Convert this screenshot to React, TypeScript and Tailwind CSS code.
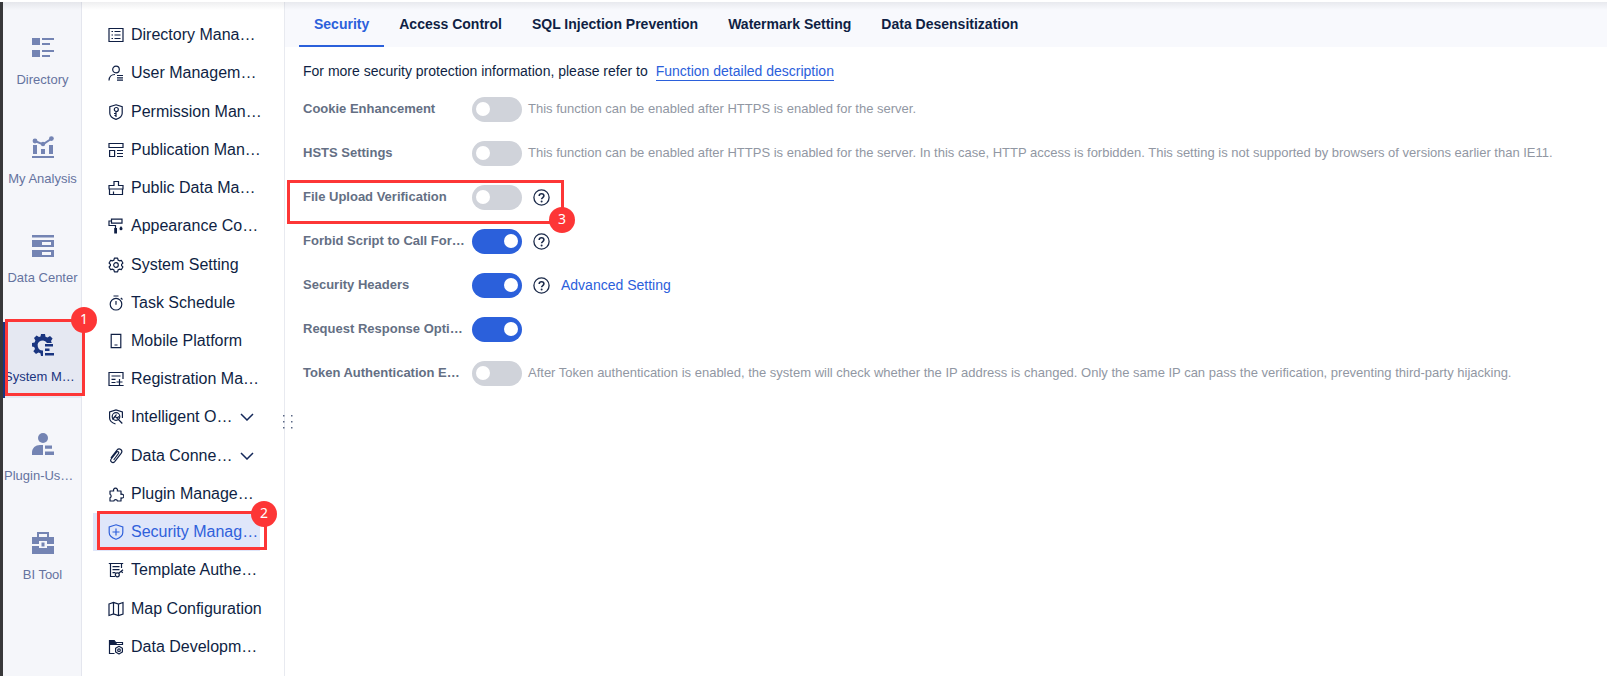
import { useState, type ReactNode } from "react";

const NAVY = "#14285a";

function Badge({ n, className }: { n: number; className: string }) {
  return (
    <span
      className={`absolute z-20 flex size-[26px] items-center justify-center rounded-full bg-[#fd3636] pb-0.5 font-['Noto_Sans',sans-serif] text-sm text-white ${className}`}
    >
      {n}
    </span>
  );
}

function Frame({ className }: { className: string }) {
  return <span className={`pointer-events-none absolute z-10 border-3 border-[#fd3636] ${className}`} />;
}

function NavIcon({ children }: { children: ReactNode }) {
  return (
    <svg width="22" height="22" viewBox="0 0 22 22" fill="currentColor" aria-hidden="true">
      {children}
    </svg>
  );
}

function MenuIcon({ children }: { children: ReactNode }) {
  return (
    <svg
      width="16"
      height="16"
      viewBox="0 0 16 16"
      fill="none"
      stroke="currentColor"
      strokeWidth="1.2"
      className="shrink-0"
      aria-hidden="true"
    >
      {children}
    </svg>
  );
}

const navItems: { label: string; clipped?: boolean; active?: boolean; icon: ReactNode }[] = [
  {
    label: "Directory",
    icon: <path d="M0 1h8v7H0zM10 1h12v2H10zM10 6h8v2h-8zM0 13h8v7H0zM10 13h12v2H10zM10 18h8v2h-8z" />,
  },
  {
    label: "My Analysis",
    icon: (
      <>
        <path d="M1 9h4v9H1zM9 13h4v5H9zM17 9h4v9h-4zM0 20h22v2H0z" />
        <path d="M3 5l8 3.4L19 3" fill="none" stroke="currentColor" strokeWidth="2" />
        <circle cx="3" cy="5" r="2.4" />
        <circle cx="11" cy="8" r="2.2" />
        <circle cx="19.4" cy="2.6" r="2.4" />
      </>
    ),
  },
  {
    label: "Data Center",
    icon: <path fillRule="evenodd" d="M0 0h22v2.4H0zM0 5h22v7H0zM10 7h9v3h-9zM0 15h22v7H0zM10 17h9v3h-9z" />,
  },
  {
    label: "System M…",
    clipped: true,
    active: true,
    icon: (
      <>
        <path
          fillRule="evenodd"
          d="M9 0h4l.5 2.7 2 .8L18 2l2.6 2.6L19 7l.8 2H15a5 5 0 1 0-4 7.5V22H9l-.6-2.800-2-.8L4 20 1.300 17.300 3 15l-.8-2L0 12.500v-3.500L2.600 8.500l.8-2L2 4 4.600 1.500 7 3l1.500-.6z"
        />
        <path d="M13 10h8v2.500h-8zM13 14.500h4.500V17H13zM13 19h9v2.600h-9z" />
      </>
    ),
  },
  {
    label: "Plugin-Us…",
    clipped: true,
    icon: (
      <>
        <circle cx="11" cy="5" r="5" />
        <path d="M0 22v-2.500C0 15 3.500 12 8 12h3v10zM13 12.500h7v3.200h-7zM13 18.500h9V22h-9z" />
      </>
    ),
  },
  {
    label: "BI Tool",
    icon: (
      <path
        fillRule="evenodd"
        d="M5 0h12v5h5v7h-7V9H7v3H0V5h5zM7 2v3h8V2zM0 14h7v2h8v-2h7v8H0zM9.500 10.500h3v4h-3z"
      />
    ),
  },
];

const gearPath =
  "M6.400 1.200h3.200l.5 1.900 1.300.7 1.900-.5 1.600 2.700-1.300 1.300v1.400l1.300 1.300-1.600 2.700-1.900-.5-1.300.7-.5 1.900H6.400l-.5-1.900-1.300-.7-1.900.5L1.100 10l1.300-1.300V7.300L1.100 6l1.600-2.700 1.900.5 1.300-.7z";

const menuItems: { label: string; active?: boolean; expandable?: boolean; icon: ReactNode }[] = [
  {
    label: "Directory Mana…",
    icon: <path d="M1 1.500h14v13H1zM3.500 4.500H5M6.500 4.500h6M3.500 8H5M6.500 8h6M3.500 11.500H5M6.500 11.500h6" />,
  },
  {
    label: "User Managem…",
    icon: (
      <>
        <circle cx="8" cy="4.500" r="3.300" />
        <path d="M1 15.500c.2-4 2.500-6 6-6M9 10.500h6M9 12.800h6M9 15.100h6" />
      </>
    ),
  },
  {
    label: "Permission Man…",
    icon: (
      <>
        <path d="M8 .8l6.200 2v6.400c0 3-2.600 5-6.200 6.200-3.600-1.200-6.200-3.200-6.200-6.200V2.800z" />
        <circle cx="8.300" cy="5.500" r="2" />
        <path d="M8 7.500V13M8 9.500H6M8 11.500H6.400" />
      </>
    ),
  },
  {
    label: "Publication Man…",
    icon: <path d="M1 1.500h14v4H1zM1.600 8.500h5v6h-5zM9 8.500h6M9 11.500h6M9 14.500h6" />,
  },
  {
    label: "Public Data Ma…",
    icon: <path d="M6 5.500v-4h4.500v4H15v3.500H1V5.500zM1.500 9v5.500h13V9M5.500 14.500V11.500" />,
  },
  {
    label: "Appearance Co…",
    icon: (
      <>
        <path d="M3.500 1.200H14v4H3.500zM3.500 3H1v4.500h6.500V10" />
        <path
          d="M6.200 10h2.800v5.500H6.200zM13 8c1 1.400 1.500 2 1.500 2.700a1.500 1.500 0 0 1-3 0C11.500 10 12 9.400 13 8z"
          fill="currentColor"
          stroke="none"
        />
      </>
    ),
  },
  {
    label: "System Setting",
    icon: (
      <>
        <path d={gearPath} strokeLinejoin="round" />
        <circle cx="8" cy="8" r="2.300" />
      </>
    ),
  },
  {
    label: "Task Schedule",
    icon: (
      <>
        <circle cx="8" cy="9.200" r="5.800" />
        <path d="M5.500 1h5M8 6v3.800M12.800 3l1.700 1.500" />
      </>
    ),
  },
  { label: "Mobile Platform", icon: <path d="M3.200 1.300h9.600v13.400H3.200zM6.500 12h3" /> },
  {
    label: "Registration Ma…",
    icon: <path d="M15 8V1.500H1v13h14V14M3.500 5h9M3.500 8.300h4M3.500 11.500h4M11.500 8v6M8.500 11h6" />,
  },
  {
    label: "Intelligent O…",
    expandable: true,
    icon: (
      <>
        <path d="M7.500 15C4 13.800 1.600 12 1.600 9V3L8 .9 14.400 3v6" />
        <circle cx="8" cy="7.500" r="3.800" />
        <path d="M8.500 5.500L7 7.500l2 1.500 2-1.500M9 9l5.300 5.500M7 7.500l-2.500 3" />
      </>
    ),
  },
  {
    label: "Data Conne…",
    expandable: true,
    icon: (
      <path
        strokeLinecap="round"
        d="M6 11.500l4.500-6c1-1.300-.9-2.700-1.900-1.400L3.200 11c-1.700 2.300 1.500 5 3.500 2.600l6.400-8.200c2.300-3.100-1.800-6-4.100-3.200L3.200 9.500"
      />
    ),
  },
  {
    label: "Plugin Manage…",
    icon: (
      <path
        strokeLinejoin="round"
        d="M2 5h3.700a2 2 0 1 1 3.600 0H13v3.500a1.900 1.900 0 1 1 0 3.300V15H9.500a1.900 1.900 0 0 0-3.700 0H2v-3.300a1.900 1.900 0 0 0 0-3.500z"
      />
    ),
  },
  {
    label: "Security Manag…",
    active: true,
    icon: <path d="M8 .8l6.800 2.200v5.500c0 3.200-2.700 5.400-6.800 6.800-4.100-1.400-6.800-3.600-6.800-6.800V3zM8 4.500v7M4.500 8h7" />,
  },
  {
    label: "Template Authe…",
    icon: (
      <>
        <path d="M13.500 6V1.500H2.500v13H7M.8 1.500h14.400M4.500 4.700h7M4.500 7.700h7M4.500 10.700h3" />
        <circle cx="9.300" cy="12.800" r="2" />
        <path d="M10.700 11.300L15 7.800M13 9.300l1.800 1.500" />
      </>
    ),
  },
  {
    label: "Map Configuration",
    icon: <path d="M1 3l4.500-1.500 5 1.500L15 1.500V13l-4.500 1.500-5-1.500L1 14.500zM5.500 1.500V13M10.500 3v11.500" />,
  },
  {
    label: "Data Developm…",
    icon: (
      <>
        <path d="M6.500 14.500H1.500v-13h4.700l1.500 2H14.500V6M1.500 5.500h13" />
        <path d="M1.500 1.500h4.700l1.500 2h1V5h-7.200z" fill="currentColor" stroke="none" />
        <path d="M11 7.300l3.400 1.900v3.900L11 15l-3.400-1.900V9.200z" strokeLinejoin="round" />
        <circle cx="11" cy="11.200" r="1.300" />
      </>
    ),
  },
];

const tabs = ["Security", "Access Control", "SQL Injection Prevention", "Watermark Setting", "Data Desensitization"];

type Setting = {
  label: string;
  on: boolean;
  note?: string;
  help?: boolean;
  link?: string;
  marked?: boolean;
};

const settings: Setting[] = [
  { label: "Cookie Enhancement", on: false, note: "This function can be enabled after HTTPS is enabled for the server." },
  {
    label: "HSTS Settings",
    on: false,
    note: "This function can be enabled after HTTPS is enabled for the server. In this case, HTTP access is forbidden. This setting is not supported by browsers of versions earlier than IE11.",
  },
  { label: "File Upload Verification", on: false, help: true, marked: true },
  { label: "Forbid Script to Call For…", on: true, help: true },
  { label: "Security Headers", on: true, help: true, link: "Advanced Setting" },
  { label: "Request Response Opti…", on: true },
  {
    label: "Token Authentication E…",
    on: false,
    note: "After Token authentication is enabled, the system will check whether the IP address is changed. Only the same IP can pass the verification, preventing third-party hijacking.",
  },
];

function SettingRow({ item, id }: { item: Setting; id: string }) {
  const [on, setOn] = useState(item.on);
  return (
    <div className="relative flex h-11 items-center text-[13px]">
      <label htmlFor={id} className="w-[169px] shrink-0 whitespace-nowrap font-bold text-[#646f84]">
        {item.label}
      </label>
      <input
        id={id}
        type="checkbox"
        role="switch"
        checked={on}
        onChange={() => setOn(!on)}
        className="flex h-[25px] w-[50px] shrink-0 cursor-pointer appearance-none items-center rounded-full bg-[#d0d3da] px-1 before:size-[14px] before:rounded-full before:bg-white checked:justify-end checked:bg-[#2b60db]"
      />
      {item.note && <span className="ml-1.5 whitespace-nowrap text-[#9197a3]">{item.note}</span>}
      {item.help && (
        <button type="button" aria-label="Help" className="ml-[11px] text-[#1b2a4a]">
          <svg width="17" height="17" viewBox="0 0 17 17" fill="none" stroke="currentColor" strokeWidth="1.300" aria-hidden="true">
            <circle cx="8.500" cy="8.500" r="7.600" />
            <path d="M6.200 6.900c0-3 4.700-2.900 4.700-.1 0 1.700-2.300 1.800-2.300 3.500" strokeWidth="1.600" />
            <circle cx="8.600" cy="12.400" r="1" fill="currentColor" stroke="none" />
          </svg>
        </button>
      )}
      {item.link && (
        <a href="#advanced" className="ml-[11px] text-sm text-[#2b60db]">
          {item.link}
        </a>
      )}
      {item.marked && (
        <>
          <Frame className="top-[5px] -left-4 h-11 w-[277px]" />
          <Badge n={3} className="top-8 left-[246px]" />
        </>
      )}
    </div>
  );
}

export default function App() {
  return (
    <div className="relative flex min-h-screen border-t-2 border-white bg-white font-['Liberation_Sans',Arial,sans-serif] text-sm text-[#0f1f44]">
      <div className="pointer-events-none absolute inset-x-0 top-0 z-10 h-2 bg-linear-to-b from-[#2b304014] to-transparent" />
      <div className="w-[3px] shrink-0 bg-[#38383a]" />

      <nav className="w-[79px] shrink-0 border-r border-[#e4e6ee] bg-[#f5f6fa] pt-[23px]">
        <ul className="flex flex-col gap-[23px]">
          {navItems.map((item) => (
            <li key={item.label} className="relative">
              <a
                href="#nav"
                className={`flex h-[76px] flex-col items-center gap-[11px] pt-3 pl-px ${
                  item.active ? "bg-[#e5e8f2] text-[#1a3580]" : "text-[#7484b3]"
                }`}
              >
                <NavIcon>{item.icon}</NavIcon>
                <span
                  className={`w-full whitespace-nowrap text-[13px] leading-5 ${item.clipped ? "text-left" : "text-center"} ${
                    item.active ? "text-[#1a3580]" : "text-[#65739f]"
                  }`}
                >
                  {item.label}
                </span>
              </a>
              {item.active && (
                <>
                  <span className="absolute inset-y-0 left-0 w-0.5 bg-[#1a3580]" />
                  <Frame className="-top-[3px] left-0.5 h-[77px] w-20" />
                  <Badge n={1} className="-top-[15px] left-[68px]" />
                </>
              )}
            </li>
          ))}
        </ul>
      </nav>

      <aside className="relative w-[203px] shrink-0 border-r border-[#e8eaf0] pt-3.5 pl-[11px]">
        <ul className="grid h-[650px] auto-rows-fr">
          {menuItems.map((item) => (
            <li key={item.label} className="relative w-[167px]">
              <a
                href="#menu"
                className={`flex h-full items-center pl-[15px] text-base ${
                  item.active ? "bg-[#dfe6fa] text-[#2f60db]" : ""
                }`}
              >
                <MenuIcon>{item.icon}</MenuIcon>
                <span className="ml-[7px] whitespace-nowrap">{item.label}</span>
                {item.expandable && (
                  <svg
                    width="14"
                    height="8"
                    viewBox="0 0 14 8"
                    fill="none"
                    stroke={NAVY}
                    strokeWidth="1.500"
                    className="mr-1.5 ml-auto"
                    aria-hidden="true"
                  >
                    <path d="M1 1l6 6 6-6" />
                  </svg>
                )}
              </a>
              {item.active && (
                <>
                  <Frame className="-top-0.5 left-1 h-[39px] w-[170px]" />
                  <Badge n={2} className="-top-3 left-[158px]" />
                </>
              )}
            </li>
          ))}
        </ul>
        <svg
          width="10"
          height="16"
          viewBox="0 0 10 16"
          fill="#5b6885"
          className="absolute top-[412px] -right-[9px]"
          aria-hidden="true"
        >
          <path d="M0 1h1.500v1.500H0zM8 1h1.500v1.500H8zM0 7h1.500v1.500H0zM8 7h1.500v1.500H8zM0 13h1.500v1.500H0zM8 13h1.500v1.500H8z" />
        </svg>
      </aside>

      <main className="min-w-0 flex-1">
        <div role="tablist" className="flex h-[45px] bg-[#f8f9fd] pl-3.5">
          {tabs.map((tab, i) => (
            <button
              key={tab}
              type="button"
              role="tab"
              aria-selected={i === 0}
              className={`border-b-2 px-[15px] font-bold whitespace-nowrap ${
                i === 0 ? "border-[#2b60db] text-[#2b60db]" : "border-transparent"
              }`}
            >
              {tab}
            </button>
          ))}
        </div>
        <div className="pt-3.5 pl-[18px]">
          <p className="mb-1.5 leading-5 whitespace-nowrap">
            For more security protection information, please refer to
            <a
              href="#description"
              className="ml-2 inline-block border-b border-[#2b60db] leading-[18px] text-[#2b60db]"
            >
              Function detailed description
            </a>
          </p>
          {settings.map((item, i) => (
            <SettingRow key={item.label} item={item} id={`setting-${i}`} />
          ))}
        </div>
      </main>
    </div>
  );
}
